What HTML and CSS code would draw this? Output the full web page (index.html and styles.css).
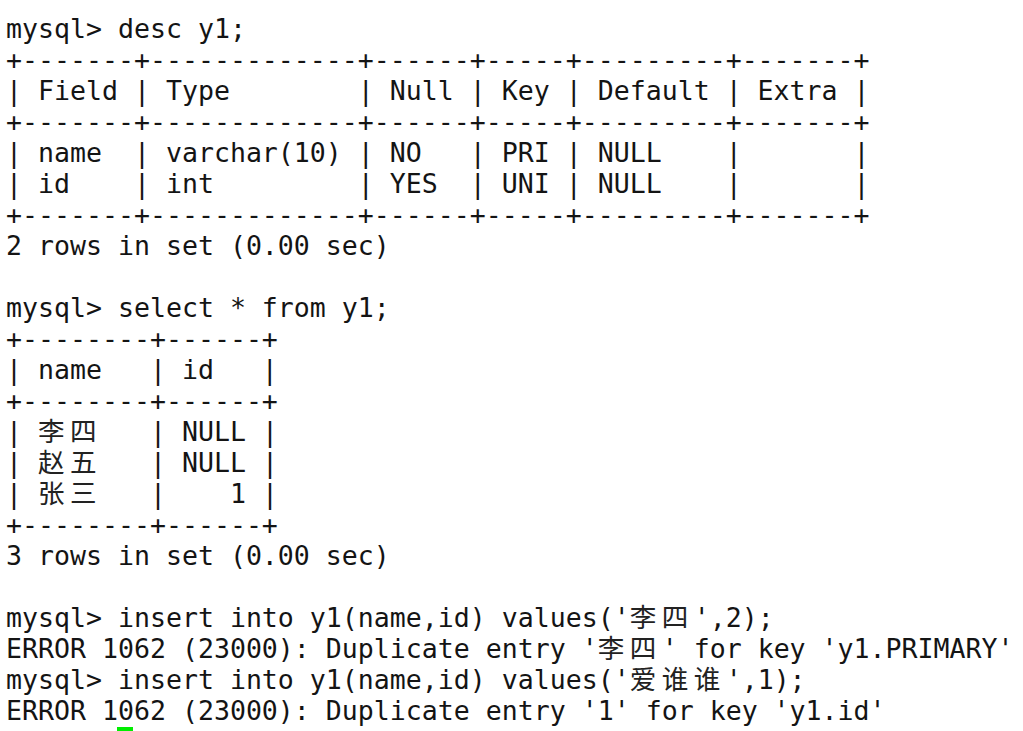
FILE: index.html
```html
<!DOCTYPE html>
<html lang="zh-CN">
<head>
<meta charset="utf-8">
<title>mysql</title>
<link rel="stylesheet" href="styles.css">
</head>
<body>
<div class="term">
<div class="l">mysql&gt; desc y1;</div>
<div class="l">+-------+-------------+------+-----+---------+-------+</div>
<div class="l">| Field | Type        | Null | Key | Default | Extra |</div>
<div class="l">+-------+-------------+------+-----+---------+-------+</div>
<div class="l">| name  | varchar(10) | NO   | PRI | NULL    |       |</div>
<div class="l">| id    | int         | YES  | UNI | NULL    |       |</div>
<div class="l">+-------+-------------+------+-----+---------+-------+</div>
<div class="l">2 rows in set (0.00 sec)</div>
<div class="l"></div>
<div class="l">mysql&gt; select * from y1;</div>
<div class="l">+--------+------+</div>
<div class="l">| name   | id   |</div>
<div class="l">+--------+------+</div>
<div class="l">| <span class="cjk">李四</span>   | NULL |</div>
<div class="l">| <span class="cjk">赵五</span>   | NULL |</div>
<div class="l">| <span class="cjk">张三</span>   |    1 |</div>
<div class="l">+--------+------+</div>
<div class="l">3 rows in set (0.00 sec)</div>
<div class="l"></div>
<div class="l">mysql&gt; insert into y1(name,id) values('<span class="cjk">李四</span>',2);</div>
<div class="l">ERROR 1062 (23000): Duplicate entry '<span class="cjk">李四</span>' for key 'y1.PRIMARY'</div>
<div class="l">mysql&gt; insert into y1(name,id) values('<span class="cjk">爱谁谁</span>',1);</div>
<div class="l">ERROR 1062 (23000): Duplicate entry '1' for key 'y1.id'</div>
<div class="cursor-row"><span class="cursor"></span></div>
</div>
</body>
</html>
```

FILE: styles.css
```css
html, body {
  margin: 0;
  padding: 0;
  background: #ffffff;
}

.term {
  padding: 13px 0 0 6px;
  font-family: "DejaVu Sans Mono", "Liberation Mono", monospace;
  font-size: 26.575px;
  color: #141414;
}

.l {
  height: 31px;
  line-height: 31px;
  white-space: pre;
}

.cjk {
  font-family: "Noto Sans CJK SC", sans-serif;
  letter-spacing: 5.425px;
  line-height: 16px;
  color: #222222;
}

.cursor-row {
  display: flex;
  padding: 1px 0 0 111px;
}

.cursor {
  width: 16px;
  height: 4px;
  background: #00ee00;
}
```
